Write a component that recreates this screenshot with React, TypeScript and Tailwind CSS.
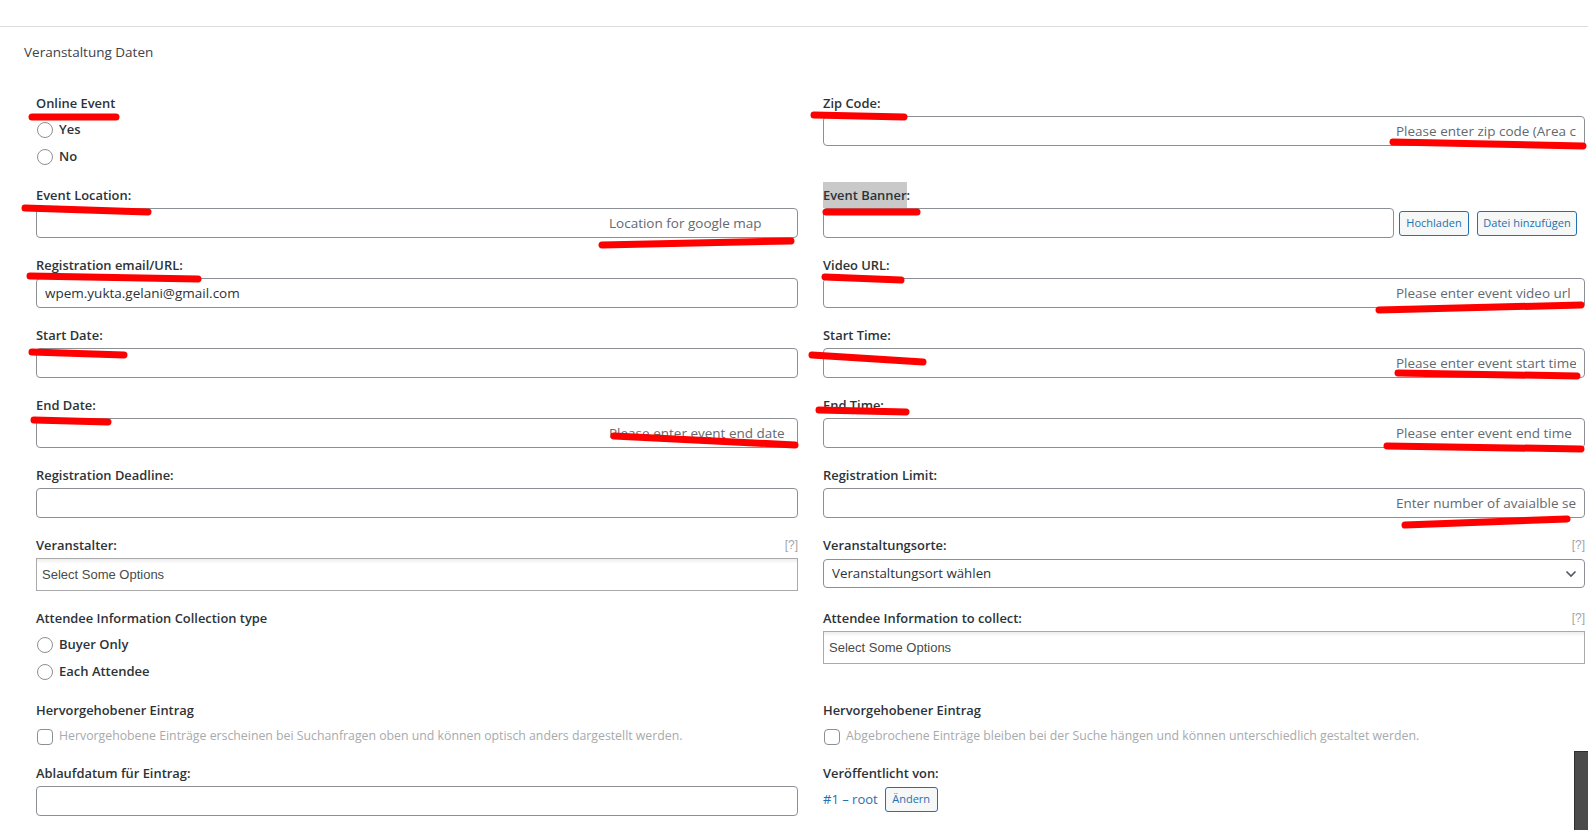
import React from 'react'

const FONT = { fontFamily: '"Open Sans", "Noto Sans", sans-serif' }

function Label({ text, help = false, hl }: { text: string; help?: boolean; hl?: string }) {
  return (
    <div className="flex items-center justify-between h-[18px] leading-[18px] text-[12.9px] font-semibold text-[#2c3338]">
      <span>
        {hl ? <span className="bg-[#c9c9c9] py-[4px]">{hl}</span> : null}
        {text}
      </span>
      {help && <span className="text-[12px] font-normal text-[#a0a5aa]" style={{ fontFamily: '"Liberation Sans", Arial, sans-serif' }}>[?]</span>}
    </div>
  )
}

function TextField({ label, placeholder, value }: { label: string; placeholder?: string; value?: string }) {
  return (
    <div className="mb-[18px]">
      <Label text={label} />
      <input
        defaultValue={value}
        placeholder={placeholder}
        className={`mt-[4px] block w-full h-[30px] rounded-[4px] border border-[#8c8f94] bg-white text-[13.5px] text-[#2c3338] outline-none placeholder:text-[#646970] ${value ? 'pl-[8px]' : 'pl-[572px] pr-[8px]'}`}
      />
    </div>
  )
}

function Radios({ label, options }: { label: string; options: string[] }) {
  return (
    <div className="mb-[16px]">
      <Label text={label} />
      <div className="pt-[4px]">
        {options.map((o) => (
          <div key={o} className="flex items-center h-[27px] pl-[1px]">
            <span className="w-[16px] h-[16px] rounded-full border border-[#8c8f94] bg-white" />
            <span className="ml-[6px] text-[13px] font-semibold text-[#2c3338]">{o}</span>
          </div>
        ))}
      </div>
    </div>
  )
}

function Chosen({ label, placeholder }: { label: string; placeholder: string }) {
  return (
    <div className="mb-[18px]">
      <Label text={label} help />
      <div
        className="mt-[4px] h-[33px] flex items-center pl-[5px] border border-[#aaaaaa] bg-linear-to-b from-[#eeeeee] from-[1%] to-white to-[15%] text-[13px] text-[#4a4a4a]"
        style={{ fontFamily: '"Liberation Sans", Arial, sans-serif' }}
      >
        {placeholder}
      </div>
    </div>
  )
}

function Check({ label, text }: { label: string; text: string }) {
  return (
    <div className="mb-[14px]">
      <Label text={label} />
      <div className="pt-[4px] flex items-center h-[31px] pl-[1px]">
        <span className="w-[16px] h-[16px] rounded-[4px] border border-[#8c8f94] bg-white" />
        <span className="ml-[6px] text-[12.3px] text-[#a7aaad]">{text}</span>
      </div>
    </div>
  )
}

function Marks() {
  const strokes: [number, number, number, number][] = [
    [32, 117, 116, 117],
    [25, 208, 148, 212],
    [602, 245, 791, 241],
    [30, 276, 198, 279],
    [32, 352, 124, 355],
    [34, 420, 108, 422],
    [614, 436, 795, 445],
    [814, 115, 904, 117],
    [1393, 142, 1583, 146],
    [826, 212, 917, 212],
    [825, 277, 901, 280],
    [1379, 310, 1581, 305],
    [812, 355, 923, 362],
    [1398, 373, 1577, 376],
    [819, 410, 906, 412],
    [1387, 446, 1581, 449],
    [1405, 525, 1567, 519],
  ]
  return (
    <svg className="absolute inset-0 pointer-events-none" width="1588" height="830" viewBox="0 0 1588 830">
      {strokes.map(([x1, y1, x2, y2], i) => (
        <line key={i} x1={x1} y1={y1} x2={x2} y2={y2} stroke="#ff0000" strokeWidth="7" strokeLinecap="round" />
      ))}
    </svg>
  )
}

export default function App() {
  return (
    <div className="relative w-[1588px] h-[830px] overflow-hidden bg-white" style={FONT}>
      <div className="h-[27px] border-b border-[#dcdcde]" />
      <div className="pl-[24px] pt-[15px] h-[62px] text-[13.5px] leading-[20px] text-[#3c434a]">Veranstaltung Daten</div>
      <div className="pt-[5px] pl-[36px] grid grid-cols-[762px_762px] gap-x-[25px]">
        <Radios label="Online Event" options={['Yes', 'No']} />
        <TextField label="Zip Code:" placeholder="Please enter zip code (Area code)" />

        <TextField label="Event Location:" placeholder="Location for google map" />
        <div className="mb-[18px]">
          <Label text=":" hl="Event Banner" />
          <div className="mt-[4px] flex items-center">
            <input className="block w-[571px] h-[30px] rounded-[4px] border border-[#8c8f94] bg-white outline-none" />
            <button className="ml-[5px] h-[25px] w-[70px] rounded-[3px] border border-[#2271b1] bg-[#f6f7f7] text-[11px] text-[#2271b1]">Hochladen</button>
            <button className="ml-[8px] h-[25px] w-[100px] rounded-[3px] border border-[#2271b1] bg-[#f6f7f7] text-[11px] text-[#2271b1]">Datei hinzufügen</button>
          </div>
        </div>

        <TextField label="Registration email/URL:" value="wpem.yukta.gelani@gmail.com" />
        <TextField label="Video URL:" placeholder="Please enter event video url" />

        <TextField label="Start Date:" />
        <TextField label="Start Time:" placeholder="Please enter event start time" />

        <TextField label="End Date:" placeholder="Please enter event end date" />
        <TextField label="End Time:" placeholder="Please enter event end time" />

        <TextField label="Registration Deadline:" />
        <TextField label="Registration Limit:" placeholder="Enter number of avaialble seats" />

        <Chosen label="Veranstalter:" placeholder="Select Some Options" />
        <div className="mb-[18px]">
          <Label text="Veranstaltungsorte:" help />
          <div className="mt-[5px] h-[29px] flex items-center justify-between pl-[8px] pr-[7px] rounded-[4px] border border-[#8c8f94] bg-white text-[13.3px] text-[#2c3338]">
            <span>Veranstaltungsort wählen</span>
            <svg width="12" height="8" viewBox="0 0 12 8" fill="none">
              <path d="M1.5 1.5 6 6l4.5-4.5" stroke="#50575e" strokeWidth="1.6" />
            </svg>
          </div>
        </div>

        <Radios label="Attendee Information Collection type" options={['Buyer Only', 'Each Attendee']} />
        <Chosen label="Attendee Information to collect:" placeholder="Select Some Options" />

        <Check label="Hervorgehobener Eintrag" text="Hervorgehobene Einträge erscheinen bei Suchanfragen oben und können optisch anders dargestellt werden." />
        <Check label="Hervorgehobener Eintrag" text="Abgebrochene Einträge bleiben bei der Suche hängen und können unterschiedlich gestaltet werden." />

        <TextField label="Ablaufdatum für Eintrag:" />
        <div>
          <Label text="Veröffentlicht von:" />
          <div className="mt-[4px] flex items-center h-[27px]">
            <span className="text-[13px] text-[#2271b1]">#1 – root</span>
            <button className="ml-[7px] h-[25px] w-[53px] rounded-[3px] border border-[#2271b1] bg-[#f6f7f7] text-[11px] text-[#2271b1]">Ändern</button>
          </div>
        </div>
      </div>
      <div className="absolute right-0 bottom-0 w-[14px] h-[79px] bg-[#4b4b4b] border-l border-t border-[#2e2e2e]" />
      <Marks />
    </div>
  )
}
